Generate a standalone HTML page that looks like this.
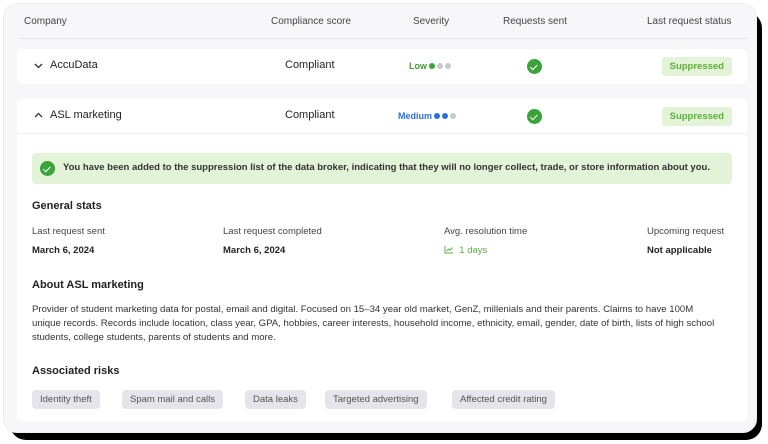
<!DOCTYPE html>
<html><head><style>
*{margin:0;padding:0;box-sizing:border-box}
body{width:768px;height:444px;background:#fff;font-family:"Liberation Sans",sans-serif;position:relative;overflow:hidden;color:#222}
.shadow{position:absolute;left:10px;top:12px;width:752px;height:428px;background:#000;border-radius:16px}
.card{position:absolute;left:3px;top:3px;width:754px;height:430px;background:#f7f7f9;border-radius:14px;border:1px solid #eee}
.a{position:absolute;white-space:nowrap}
.h{font-size:10px;color:#444;top:12px}
.row{position:absolute;left:13px;width:730px;background:#fff;border-radius:6px}
.chk{position:absolute;width:15px;height:15px;border-radius:50%;background:#3aa43a}
.chk:after{content:"";position:absolute;left:5px;top:3.5px;width:3px;height:5.5px;border:solid #fff;border-width:0 1.8px 1.8px 0;transform:rotate(45deg)}
.sup{position:absolute;background:#e2f3d8;color:#5fae3f;font-size:9.5px;font-weight:bold;padding:4px 8px;border-radius:3px;right:15px}
.dot{display:inline-block;width:6px;height:6px;border-radius:50%;margin-left:2px;background:#c8c8cc}
.t{font-size:11px}
.lbl{font-size:9.5px;color:#444}
.val{font-size:9.5px;font-weight:bold}
.sec{font-size:11px;font-weight:bold}
.tag{position:absolute;top:0;background:#e4e4ea;color:#555;font-size:9.5px;padding:4px 8px;border-radius:4px;white-space:nowrap}
</style></head><body>
<div class="shadow"></div>
<div class="card">
<div class="a h" style="left:20px">Company</div>
<div class="a h" style="left:267px">Compliance score</div>
<div class="a h" style="left:409px">Severity</div>
<div class="a h" style="left:499px">Requests sent</div>
<div class="a h" style="left:643px">Last request status</div>
<div style="position:absolute;left:13px;top:34px;width:730px;border-top:1px solid #e8e8ec"></div>

<div class="row" style="top:45px;height:35px">
<svg class="a" style="left:17px;top:14px" width="9" height="6" viewBox="0 0 9 6"><path d="M1 1L4.5 4.5L8 1" fill="none" stroke="#333" stroke-width="1.3"/></svg>
<div class="a t" style="left:33px;top:10px">AccuData</div>
<div class="a t" style="left:268px;top:10px">Compliant</div>
<div class="a" style="left:392px;top:12px;font-size:9px;font-weight:bold;color:#4a9a3a">Low<span class="dot" style="background:#3aa43a"></span><span class="dot"></span><span class="dot"></span></div>
<div class="chk" style="left:510px;top:10px"></div>
<div class="sup" style="top:8px">Suppressed</div>
</div>

<div class="row" style="top:95px;height:322px">
<svg class="a" style="left:17px;top:13px" width="9" height="6" viewBox="0 0 9 6"><path d="M1 5L4.5 1.5L8 5" fill="none" stroke="#333" stroke-width="1.3"/></svg>
<div class="a t" style="left:33px;top:10px">ASL marketing</div>
<div class="a t" style="left:268px;top:10px">Compliant</div>
<div class="a" style="left:381px;top:12px;font-size:9px;font-weight:bold;color:#2f6fe0">Medium<span class="dot" style="background:#2f6fe0"></span><span class="dot" style="background:#2f6fe0"></span><span class="dot"></span></div>
<div class="chk" style="left:510px;top:10px"></div>
<div class="sup" style="top:8px">Suppressed</div>
<div style="position:absolute;left:0;top:34px;width:730px;border-top:1px solid #eee"></div>
<div style="position:absolute;left:15px;top:54px;width:700px;height:31px;background:#e2f3d8;border-radius:4px">
<div class="chk" style="left:8px;top:8px"></div>
<div class="a" style="left:31px;top:9px;font-size:9.5px;font-weight:bold;color:#333">You have been added to the suppression list of the data broker, indicating that they will no longer collect, trade, or store information about you.</div>
</div>
<div class="a sec" style="left:15px;top:101px">General stats</div>
<div class="a lbl" style="left:15px;top:127px">Last request sent</div>
<div class="a val" style="left:15px;top:146px">March 6, 2024</div>
<div class="a lbl" style="left:206px;top:127px">Last request completed</div>
<div class="a val" style="left:206px;top:146px">March 6, 2024</div>
<div class="a lbl" style="left:427px;top:127px">Avg. resolution time</div>
<div class="a val" style="left:427px;top:146px;color:#5fae3f;font-weight:normal"><svg width="10" height="9" viewBox="0 0 10 9" style="vertical-align:-1px"><path d="M1 1V8H9M2.5 6L4.5 4L6 5.2L8.5 2.5" fill="none" stroke="#5fae3f" stroke-width="1"/></svg>&nbsp; 1 days</div>
<div class="a lbl" style="left:630px;top:127px">Upcoming request</div>
<div class="a val" style="left:630px;top:146px">Not applicable</div>
<div class="a sec" style="left:15px;top:180px">About ASL marketing</div>
<div class="a" style="left:15px;top:204px;font-size:9.6px;line-height:14px;color:#333;white-space:normal;width:690px">Provider of student marketing data for postal, email and digital. Focused on 15–34 year old market, GenZ, millenials and their parents. Claims to have 100M unique records. Records include location, class year, GPA, hobbies, career interests, household income, ethnicity, email, gender, date of birth, lists of high school students, college students, parents of students and more.</div>
<div class="a sec" style="left:15px;top:266px">Associated risks</div>
<div style="position:absolute;left:15px;top:291px">
<div class="tag" style="left:0">Identity theft</div>
<div class="tag" style="left:90px">Spam mail and calls</div>
<div class="tag" style="left:213px">Data leaks</div>
<div class="tag" style="left:293px">Targeted advertising</div>
<div class="tag" style="left:420px">Affected credit rating</div>
</div>
</div>
</div>
</body></html>
